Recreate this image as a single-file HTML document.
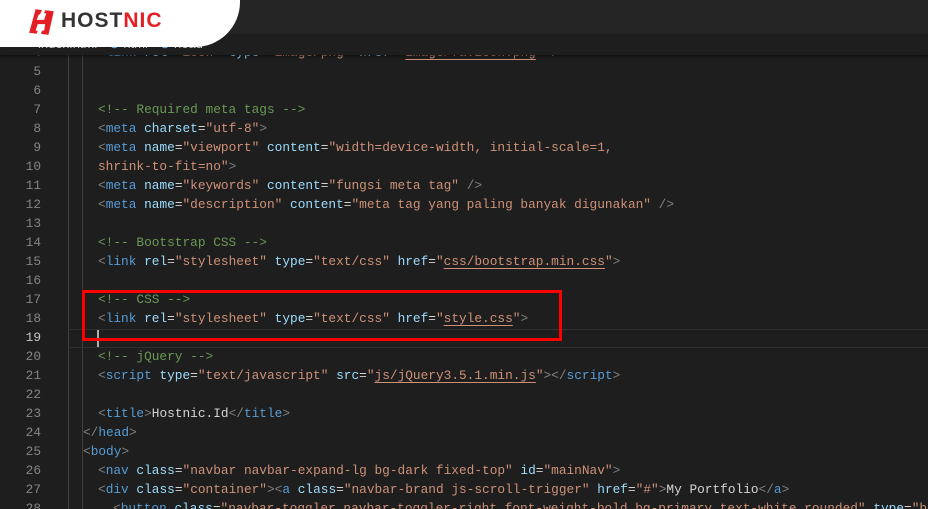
<!DOCTYPE html>
<html><head><meta charset="utf-8"><style>
html,body{margin:0;width:928px;height:509px;overflow:hidden}
body{background:#1e1e1e;position:relative;font-family:"Liberation Mono",monospace;font-size:12.8px}
.top{position:absolute;left:0;top:0;width:928px;height:34px;background:#252526}
.bc{position:absolute;left:0;top:34px;width:928px;height:21px;background:#1e1e1e;box-shadow:0 1px 3px rgba(0,0,0,0.6);z-index:3;font-family:"Liberation Sans",sans-serif;font-size:13px;color:#ccc}
.ln{position:absolute;left:0;width:41px;text-align:right;color:#858585;height:19px;line-height:19px}
.c{position:absolute;white-space:pre;height:19px;line-height:19px;color:#d4d4d4}
.g{color:#808080}.t{color:#569cd6}.a{color:#9cdcfe}.s{color:#ce9178}.m{color:#6a9955}
.u{text-decoration:underline;text-underline-offset:3px}
.guide{position:absolute;width:1px;background:#404040;top:55px;height:454px}
</style></head><body>
<div class="top"></div>
<div class="guide" style="left:68px"></div>
<div class="guide" style="left:82px"></div>
<div style="position:absolute;left:68px;top:329px;width:860px;height:17px;border-top:1px solid #2f2f2f;border-bottom:1px solid #2f2f2f"></div>
<div style="position:absolute;left:97px;top:330px;width:2px;height:17px;background:#aeafad"></div>

<div class="ln" style="top:43px">4</div><div class="c" style="left:98px;top:43px"><span class="g">&lt;</span><span class="t">link</span> <span class="a">rel</span>=<span class="s">"icon"</span> <span class="a">type</span>=<span class="s">"image/png"</span> <span class="a">href</span>=<span class="s">"<span class="u">image/favicon.png</span>"</span> <span class="g">/&gt;</span></div>
<div class="ln" style="top:62px">5</div>
<div class="ln" style="top:81px">6</div>
<div class="ln" style="top:100px">7</div><div class="c m" style="left:98px;top:100px">&lt;!-- Required meta tags --&gt;</div>
<div class="ln" style="top:119px">8</div><div class="c" style="left:98px;top:119px"><span class="g">&lt;</span><span class="t">meta</span> <span class="a">charset</span>=<span class="s">"utf-8"</span><span class="g">&gt;</span></div>
<div class="ln" style="top:138px">9</div><div class="c" style="left:98px;top:138px"><span class="g">&lt;</span><span class="t">meta</span> <span class="a">name</span>=<span class="s">"viewport"</span> <span class="a">content</span>=<span class="s">"width=device-width, initial-scale=1,</span></div>
<div class="ln" style="top:157px">10</div><div class="c" style="left:98px;top:157px"><span class="s">shrink-to-fit=no"</span><span class="g">&gt;</span></div>
<div class="ln" style="top:176px">11</div><div class="c" style="left:98px;top:176px"><span class="g">&lt;</span><span class="t">meta</span> <span class="a">name</span>=<span class="s">"keywords"</span> <span class="a">content</span>=<span class="s">"fungsi meta tag"</span> <span class="g">/&gt;</span></div>
<div class="ln" style="top:195px">12</div><div class="c" style="left:98px;top:195px"><span class="g">&lt;</span><span class="t">meta</span> <span class="a">name</span>=<span class="s">"description"</span> <span class="a">content</span>=<span class="s">"meta tag yang paling banyak digunakan"</span> <span class="g">/&gt;</span></div>
<div class="ln" style="top:214px">13</div>
<div class="ln" style="top:233px">14</div><div class="c m" style="left:98px;top:233px">&lt;!-- Bootstrap CSS --&gt;</div>
<div class="ln" style="top:252px">15</div><div class="c" style="left:98px;top:252px"><span class="g">&lt;</span><span class="t">link</span> <span class="a">rel</span>=<span class="s">"stylesheet"</span> <span class="a">type</span>=<span class="s">"text/css"</span> <span class="a">href</span>=<span class="s">"<span class="u">css/bootstrap.min.css</span>"</span><span class="g">&gt;</span></div>
<div class="ln" style="top:271px">16</div>
<div class="ln" style="top:290px">17</div><div class="c m" style="left:98px;top:290px">&lt;!-- CSS --&gt;</div>
<div class="ln" style="top:309px">18</div><div class="c" style="left:98px;top:309px"><span class="g">&lt;</span><span class="t">link</span> <span class="a">rel</span>=<span class="s">"stylesheet"</span> <span class="a">type</span>=<span class="s">"text/css"</span> <span class="a">href</span>=<span class="s">"<span class="u">style.css</span>"</span><span class="g">&gt;</span></div>
<div class="ln" style="top:328px;color:#c6c6c6">19</div>
<div class="ln" style="top:347px">20</div><div class="c m" style="left:98px;top:347px">&lt;!-- jQuery --&gt;</div>
<div class="ln" style="top:366px">21</div><div class="c" style="left:98px;top:366px"><span class="g">&lt;</span><span class="t">script</span> <span class="a">type</span>=<span class="s">"text/javascript"</span> <span class="a">src</span>=<span class="s">"<span class="u">js/jQuery3.5.1.min.js</span>"</span><span class="g">&gt;&lt;/</span><span class="t">script</span><span class="g">&gt;</span></div>
<div class="ln" style="top:385px">22</div>
<div class="ln" style="top:404px">23</div><div class="c" style="left:98px;top:404px"><span class="g">&lt;</span><span class="t">title</span><span class="g">&gt;</span>Hostnic.Id<span class="g">&lt;/</span><span class="t">title</span><span class="g">&gt;</span></div>
<div class="ln" style="top:423px">24</div><div class="c" style="left:83px;top:423px"><span class="g">&lt;/</span><span class="t">head</span><span class="g">&gt;</span></div>
<div class="ln" style="top:442px">25</div><div class="c" style="left:83px;top:442px"><span class="g">&lt;</span><span class="t">body</span><span class="g">&gt;</span></div>
<div class="ln" style="top:461px">26</div><div class="c" style="left:98px;top:461px"><span class="g">&lt;</span><span class="t">nav</span> <span class="a">class</span>=<span class="s">"navbar navbar-expand-lg bg-dark fixed-top"</span> <span class="a">id</span>=<span class="s">"mainNav"</span><span class="g">&gt;</span></div>
<div class="ln" style="top:480px">27</div><div class="c" style="left:98px;top:480px"><span class="g">&lt;</span><span class="t">div</span> <span class="a">class</span>=<span class="s">"container"</span><span class="g">&gt;&lt;</span><span class="t">a</span> <span class="a">class</span>=<span class="s">"navbar-brand js-scroll-trigger"</span> <span class="a">href</span>=<span class="s">"#"</span><span class="g">&gt;</span>My Portfolio<span class="g">&lt;/</span><span class="t">a</span><span class="g">&gt;</span></div>
<div class="ln" style="top:499px">28</div><div class="c" style="left:113px;top:499px"><span class="g">&lt;</span><span class="t">button</span> <span class="a">class</span>=<span class="s">"navbar-toggler navbar-toggler-right font-weight-bold bg-primary text-white rounded"</span> <span class="a">type</span>=<span class="s">"b</span></div>

<div style="position:absolute;left:82px;top:290px;width:474px;height:45px;border:3px solid #f00"></div>

<div class="bc"><span style="position:absolute;left:38px;top:2px">index.html › <span style="color:#75beff">⊙</span> html › <span style="color:#75beff">⊙</span> head</span></div>
<div style="position:absolute;left:0;top:0;width:240px;height:47px;background:#fff;border-bottom-right-radius:45px;z-index:5"></div>
<div style="position:absolute;left:27px;top:7px;z-index:6">
<svg width="30" height="30" viewBox="0 0 28 28"><path d="M8 2 L14 3 L12 7 L11 7 L9 12 L16 12 L18 6 L16 6 L17 3 L25 4 L20 26 L13 25 L14 22 L16 22 L17 16 L10 16 L8 22 L10 22 L9 25 L2 24 L7 6 Z" fill="#e31e24"/></svg>
</div>
<div style="position:absolute;left:61px;top:9px;z-index:6;font-family:'Liberation Sans',sans-serif;font-weight:bold;font-size:21px;letter-spacing:1px;color:#333">HOST<span style="color:#e31e24">NIC</span></div>
</body></html>
